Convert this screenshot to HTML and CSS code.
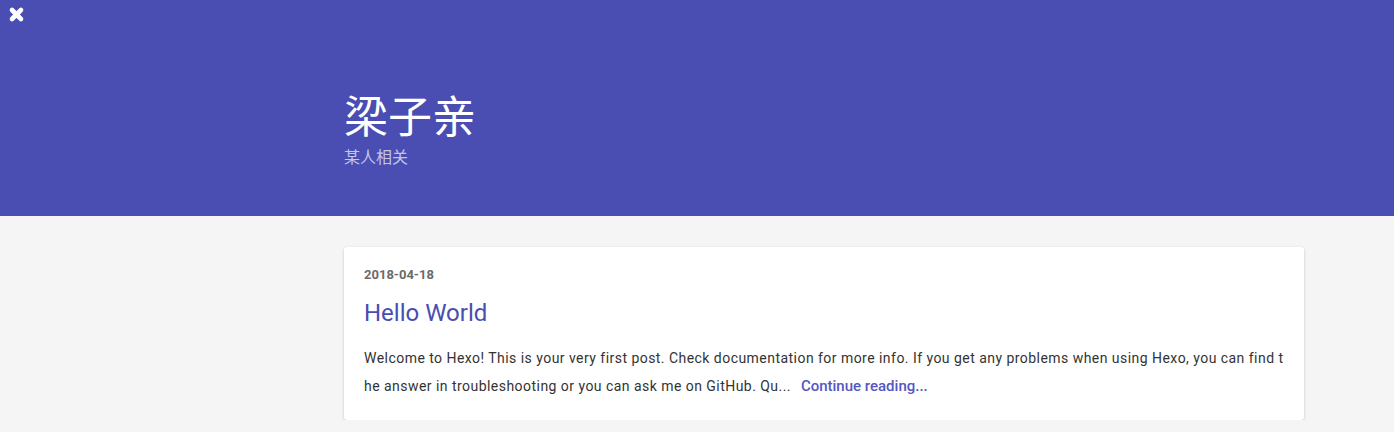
FILE: index.html
```html
<!DOCTYPE html>
<html>
<head>
<meta charset="utf-8">
<link rel="stylesheet" href="styles.css">
</head>
<body>
<header class="hero">
  <button class="close" aria-label="close">
    <svg width="17" height="17" viewBox="0 0 17 17"><path d="M4 4 L13 13 M13 4 L4 13" stroke="#fff" stroke-width="4.6" stroke-linecap="round"/></svg>
  </button>
  <div class="hero-inner">
    <h1 class="site-title">梁子亲</h1>
    <p class="site-sub">某人相关</p>
  </div>
</header>
<main class="main">
  <article class="card">
    <div class="date">2018-04-18</div>
    <h2 class="post-title">Hello World</h2>
    <p class="excerpt">Welcome to Hexo! This is your very first post. Check documentation for more info. If you get any problems when using Hexo, you can find the answer in troubleshooting or you can ask me on GitHub. Qu... <a class="more" href="#">Continue reading...</a></p>
  </article>
</main>
</body>
</html>
```
FILE: styles.css
```css
html, body { margin: 0; padding: 0; }
body {
  background: #f5f5f5;
  font-family: Roboto, "Noto Sans CJK SC", sans-serif;
}
.hero {
  background: #4a4db1;
  height: 216px;
  position: relative;
}
.close {
  position: absolute;
  left: 8px;
  top: 6px;
  padding: 0;
  border: 0;
  background: none;
  width: 17px;
  height: 17px;
  line-height: 0;
}
.hero-inner {
  width: 960px;
  margin: 0 0 0 344px;
  padding-top: 86px;
}
.site-title {
  margin: 0;
  color: #fff;
  font-family: "Noto Sans CJK SC", sans-serif;
  font-weight: 400;
  font-size: 44px;
  line-height: 56px;
}
.site-sub {
  margin: 4px 0 0;
  color: #c3c4e8;
  font-family: "Noto Sans CJK SC", sans-serif;
  font-size: 16px;
  line-height: 20px;
}
.main {
  padding: 31px 0 0 344px;
}
.card {
  width: 920px;
  background: #fff;
  border-radius: 3px;
  box-shadow: 0 1px 3px rgba(0,0,0,0.2);
  padding: 20px 20px 20px;
}
.date {
  color: #6b6b6b;
  font-weight: 700;
  font-size: 13px;
  line-height: 16px;
}
.post-title {
  margin: 14px 0 0;
  color: #4a4db1;
  font-weight: 400;
  font-size: 24px;
  line-height: 32px;
}
.excerpt {
  margin: 15px 0 0;
  color: #333;
  font-size: 14px;
  line-height: 28px;
  letter-spacing: 0.46px;
  word-break: break-all;
}
.more {
  color: #5457c0;
  font-weight: 500;
  font-size: 15px;
  letter-spacing: 0;
  text-decoration: none;
  margin-left: 6px;
}
```
